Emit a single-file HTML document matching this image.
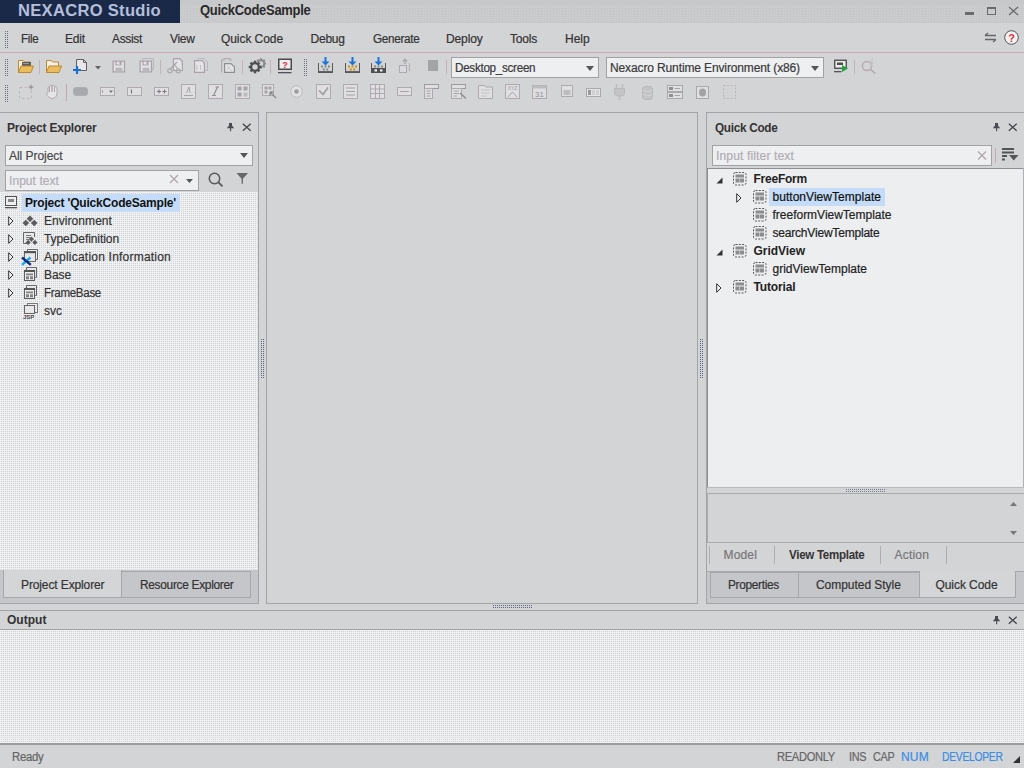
<!DOCTYPE html>
<html><head><meta charset="utf-8"><title>Nexacro Studio</title>
<style>
html,body{margin:0;padding:0;}
body{width:1024px;height:768px;overflow:hidden;position:relative;background:#d3d4d6;font-family:"Liberation Sans", sans-serif;}
.a{position:absolute;}
.t{position:absolute;white-space:nowrap;font-family:"Liberation Sans", sans-serif;-webkit-text-stroke:0.2px currentColor;}
</style></head><body>
<div class="a" style="left:0px;top:0px;width:1024px;height:23px;background:#c7c8ca;"></div>
<svg class="a" style="left:180px;top:5px" width="844" height="18"><defs><pattern id="tdots" width="3" height="4" patternUnits="userSpaceOnUse"><rect x="2" y="0" width="1" height="1" fill="#d3d4d6"/><rect x="0" y="2" width="1" height="1" fill="#d3d4d6"/></pattern></defs><rect width="844" height="18" fill="url(#tdots)"/></svg>
<div class="a" style="left:0px;top:0px;width:180px;height:23px;background:#1a2948;"></div>
<div class="a" style="left:965px;top:12px;width:9px;height:3px;background:#6a6a6a;"></div>
<div class="a" style="left:987px;top:7px;width:9px;height:8px;border:2px solid #6a6a6a;box-sizing:border-box;border-width:2px 1px 1px 1px;"></div>
<svg class="a" style="left:1008px;top:6px;" width="11" height="10" viewBox="0 0 11 10"><path d="M1 1 L10 9 M10 1 L1 9" stroke="#6a6a6a" stroke-width="1.3"/></svg>
<svg class="a" style="left:5px;top:31px;" width="4" height="18" viewBox="0 0 4 18"><g fill="#6b6f80"><rect x="0" y="0" width="1" height="1"/><rect x="2" y="0" width="1" height="1"/><rect x="0" y="2" width="1" height="1"/><rect x="2" y="2" width="1" height="1"/><rect x="0" y="4" width="1" height="1"/><rect x="2" y="4" width="1" height="1"/><rect x="0" y="6" width="1" height="1"/><rect x="2" y="6" width="1" height="1"/><rect x="0" y="8" width="1" height="1"/><rect x="2" y="8" width="1" height="1"/><rect x="0" y="10" width="1" height="1"/><rect x="2" y="10" width="1" height="1"/><rect x="0" y="12" width="1" height="1"/><rect x="2" y="12" width="1" height="1"/><rect x="0" y="14" width="1" height="1"/><rect x="2" y="14" width="1" height="1"/><rect x="0" y="16" width="1" height="1"/><rect x="2" y="16" width="1" height="1"/></g></svg>
<svg class="a" style="left:984px;top:32px;" width="13" height="11" viewBox="0 0 13 11"><path d="M1 3.5 H12 M1 3.5 L4 1 M12 7.5 H1 M12 7.5 L9 10" stroke="#666" stroke-width="1.4" fill="none"/></svg>
<svg class="a" style="left:1004px;top:30px;" width="15" height="15" viewBox="0 0 15 15"><circle cx="7.5" cy="7.5" r="6.8" fill="#f2f2f2" stroke="#555" stroke-width="1"/><text x="7.5" y="11.6" font-family="Liberation Sans" font-weight="bold" font-size="11" fill="#e0303a" text-anchor="middle">?</text></svg>
<div class="a" style="left:0px;top:52px;width:1024px;height:1px;background:#c8aab3;"></div>
<svg class="a" style="left:5px;top:59px;" width="4" height="18" viewBox="0 0 4 18"><g fill="#6b6f80"><rect x="0" y="0" width="1" height="1"/><rect x="2" y="0" width="1" height="1"/><rect x="0" y="2" width="1" height="1"/><rect x="2" y="2" width="1" height="1"/><rect x="0" y="4" width="1" height="1"/><rect x="2" y="4" width="1" height="1"/><rect x="0" y="6" width="1" height="1"/><rect x="2" y="6" width="1" height="1"/><rect x="0" y="8" width="1" height="1"/><rect x="2" y="8" width="1" height="1"/><rect x="0" y="10" width="1" height="1"/><rect x="2" y="10" width="1" height="1"/><rect x="0" y="12" width="1" height="1"/><rect x="2" y="12" width="1" height="1"/><rect x="0" y="14" width="1" height="1"/><rect x="2" y="14" width="1" height="1"/><rect x="0" y="16" width="1" height="1"/><rect x="2" y="16" width="1" height="1"/></g></svg>
<svg class="a" style="left:18px;top:60px;" width="16" height="13" viewBox="0 0 16 13"><path d="M0.5 12 V0.5 H5.5 L6.5 2 H12.5 V6" fill="#f3eee8" stroke="#bf8a2c"/><rect x="4" y="2" width="9" height="4" fill="#5d5d5f"/><rect x="5" y="3" width="6" height="1" fill="#9a9a9c"/><path d="M0.5 12.5 L3 6 H15.5 L13 12.5 Z" fill="#ebbc5e" stroke="#bf8a2c"/></svg>
<div class="a" style="left:39px;top:60px;width:1px;height:14px;background:#c4b2ba;"></div>
<svg class="a" style="left:46px;top:60px;" width="16" height="13" viewBox="0 0 16 13"><path d="M0.5 12 V0.5 H5.5 L6.5 2 H12.5 V6" fill="#f3eee8" stroke="#bf8a2c"/><path d="M0.5 12.5 L3 6 H15.5 L13 12.5 Z" fill="#ebbc5e" stroke="#bf8a2c"/></svg>
<svg class="a" style="left:72px;top:58px;" width="16" height="17" viewBox="0 0 16 17"><path d="M4.5 1.5 H11.5 L14.5 4.5 V12.5 H4.5 Z" fill="#e9e7e9" stroke="#606060" stroke-width="1"/><path d="M11.5 1.5 V4.5 H14.5" fill="none" stroke="#606060"/><path d="M5 8 V16 M1 12 H9" stroke="#1a6fd6" stroke-width="2.2"/></svg>
<svg class="a" style="left:95px;top:66px;" width="6" height="4" viewBox="0 0 6 4"><path d="M0 0 H6 L3 3.5 Z" fill="#666"/></svg>
<svg class="a" style="left:112px;top:60px;" width="14" height="13" viewBox="0 0 14 13"><g transform="translate(0.5,0.5)"><path d="M0.6 0.6 H12 V11.4 H0.6 Z" fill="#e4e4e6" stroke="#aba1aa" stroke-width="1.3"/><path d="M3.5 0.6 V4.5 H8.5 V0.6" fill="none" stroke="#aba1aa" stroke-width="1.2"/><rect x="7" y="1" width="1.5" height="2.5" fill="#aba1aa"/><rect x="3" y="7.2" width="6.8" height="4" fill="#b9b9bc"/></g></svg>
<svg class="a" style="left:139px;top:58px;" width="16" height="15" viewBox="0 0 16 15"><path d="M3.5 2.5 V0.5 H14.5 V11.5 H13" fill="none" stroke="#b8b8bc"/><g transform="translate(0.5,2.5)"><path d="M0.6 0.6 H12 V11.4 H0.6 Z" fill="#e4e4e6" stroke="#aba1aa" stroke-width="1.3"/><path d="M3.5 0.6 V4.5 H8.5 V0.6" fill="none" stroke="#aba1aa" stroke-width="1.2"/><rect x="7" y="1" width="1.5" height="2.5" fill="#aba1aa"/><rect x="3" y="7.2" width="6.8" height="4" fill="#b9b9bc"/></g></svg>
<div class="a" style="left:160px;top:60px;width:1px;height:14px;background:#c4b2ba;"></div>
<svg class="a" style="left:167px;top:58px;" width="16" height="16" viewBox="0 0 16 16"><path d="M6.5 0.6 H12.5 L15.4 3.5 V12.5 H6.5 Z" fill="#e4e4e6" stroke="#aba1aa" stroke-width="1.2"/><path d="M10 4 L3 11.5 M7 6 L11 11" stroke="#a8a8ac" stroke-width="1.2"/><circle cx="2.8" cy="12.8" r="2.1" fill="none" stroke="#a8a8ac" stroke-width="1.1"/><circle cx="11.2" cy="12.8" r="2.1" fill="none" stroke="#a8a8ac" stroke-width="1.1"/></svg>
<svg class="a" style="left:194px;top:58px;" width="15" height="16" viewBox="0 0 15 16"><path d="M3.5 0.5 H10 L13.5 4 V12.5 H11" fill="none" stroke="#b8b8bc"/><path d="M0.6 2.6 H8 L10.4 5 V14.4 H0.6 Z" fill="#e4e4e6" stroke="#aba1aa" stroke-width="1.2"/><path d="M3 7 V12 M6.5 7 V12" stroke="#c0c0c3"/></svg>
<svg class="a" style="left:221px;top:58px;" width="14" height="16" viewBox="0 0 14 16"><path d="M0.6 14.4 V2 H3 V0.6 H9 V2 H11" fill="none" stroke="#b4acb2" stroke-width="1.2"/><path d="M3.6 5.6 H10 L13.4 9 V14.4 H3.6 Z" fill="#e6e6e8" stroke="#8f8f92" stroke-width="1.2"/><path d="M6 8 L11 13 M9 8 L6 12" stroke="#c4c4c7"/></svg>
<div class="a" style="left:242px;top:60px;width:1px;height:14px;background:#c4b2ba;"></div>
<svg class="a" style="left:248px;top:57px;" width="18" height="17" viewBox="0 0 18 17"><circle cx="13" cy="6.5" r="3.3" fill="none" stroke="#8c8c8e" stroke-width="2.0"/><rect x="12.0" y="1.2999999999999998" width="2" height="2" fill="#8c8c8e" transform="rotate(0 13 6.5)"/><rect x="12.0" y="1.2999999999999998" width="2" height="2" fill="#8c8c8e" transform="rotate(45 13 6.5)"/><rect x="12.0" y="1.2999999999999998" width="2" height="2" fill="#8c8c8e" transform="rotate(90 13 6.5)"/><rect x="12.0" y="1.2999999999999998" width="2" height="2" fill="#8c8c8e" transform="rotate(135 13 6.5)"/><rect x="12.0" y="1.2999999999999998" width="2" height="2" fill="#8c8c8e" transform="rotate(180 13 6.5)"/><rect x="12.0" y="1.2999999999999998" width="2" height="2" fill="#8c8c8e" transform="rotate(225 13 6.5)"/><rect x="12.0" y="1.2999999999999998" width="2" height="2" fill="#8c8c8e" transform="rotate(270 13 6.5)"/><rect x="12.0" y="1.2999999999999998" width="2" height="2" fill="#8c8c8e" transform="rotate(315 13 6.5)"/><circle cx="7" cy="10" r="5.6" fill="#d3d4d6"/><circle cx="7" cy="10" r="3.9" fill="none" stroke="#505052" stroke-width="2.4"/><rect x="5.8" y="3.7" width="2.4" height="2.4" fill="#505052" transform="rotate(0 7 10)"/><rect x="5.8" y="3.7" width="2.4" height="2.4" fill="#505052" transform="rotate(45 7 10)"/><rect x="5.8" y="3.7" width="2.4" height="2.4" fill="#505052" transform="rotate(90 7 10)"/><rect x="5.8" y="3.7" width="2.4" height="2.4" fill="#505052" transform="rotate(135 7 10)"/><rect x="5.8" y="3.7" width="2.4" height="2.4" fill="#505052" transform="rotate(180 7 10)"/><rect x="5.8" y="3.7" width="2.4" height="2.4" fill="#505052" transform="rotate(225 7 10)"/><rect x="5.8" y="3.7" width="2.4" height="2.4" fill="#505052" transform="rotate(270 7 10)"/><rect x="5.8" y="3.7" width="2.4" height="2.4" fill="#505052" transform="rotate(315 7 10)"/></svg>
<div class="a" style="left:270px;top:60px;width:1px;height:14px;background:#c4b2ba;"></div>
<svg class="a" style="left:278px;top:58px;" width="14" height="16" viewBox="0 0 14 16"><rect x="0.75" y="1.25" width="12.5" height="10" fill="#ededee" stroke="#4a4a4a" stroke-width="1.5"/><text x="7" y="10" font-family="Liberation Sans" font-weight="bold" font-size="9" fill="#e0283a" text-anchor="middle">?</text><rect x="0" y="14" width="13.5" height="1.3" fill="#505058"/></svg>
<svg class="a" style="left:304px;top:59px;" width="4" height="18" viewBox="0 0 4 18"><g fill="#6b6f80"><rect x="0" y="0" width="1" height="1"/><rect x="2" y="0" width="1" height="1"/><rect x="0" y="2" width="1" height="1"/><rect x="2" y="2" width="1" height="1"/><rect x="0" y="4" width="1" height="1"/><rect x="2" y="4" width="1" height="1"/><rect x="0" y="6" width="1" height="1"/><rect x="2" y="6" width="1" height="1"/><rect x="0" y="8" width="1" height="1"/><rect x="2" y="8" width="1" height="1"/><rect x="0" y="10" width="1" height="1"/><rect x="2" y="10" width="1" height="1"/><rect x="0" y="12" width="1" height="1"/><rect x="2" y="12" width="1" height="1"/><rect x="0" y="14" width="1" height="1"/><rect x="2" y="14" width="1" height="1"/><rect x="0" y="16" width="1" height="1"/><rect x="2" y="16" width="1" height="1"/></g></svg>
<svg class="a" style="left:318px;top:57px;" width="15" height="16" viewBox="0 0 15 16"><rect x="6.5" y="0" width="2" height="5" fill="#1a73d9"/><path d="M3.5 4.5 H11.5 L7.5 8.5 Z" fill="#1a73d9"/><path d="M0.5 6 V15 H14.5 V6" fill="none" stroke="#58585a"/><rect x="0" y="14.2" width="15" height="1.8" fill="#58585a"/><g fill="#88888a"><rect x="3" y="8.5" width="2" height="2"/><rect x="6.5" y="8.5" width="2" height="2"/><rect x="10" y="8.5" width="2" height="2"/><rect x="4.8" y="11.5" width="2" height="2"/><rect x="8.2" y="11.5" width="2" height="2"/></g></svg>
<svg class="a" style="left:345px;top:57px;" width="15" height="16" viewBox="0 0 15 16"><rect x="6.5" y="0" width="2" height="5" fill="#1a73d9"/><path d="M3.5 4.5 H11.5 L7.5 8.5 Z" fill="#1a73d9"/><path d="M0.5 6 V15 H14.5 V6" fill="none" stroke="#58585a"/><rect x="0" y="14.2" width="15" height="1.8" fill="#58585a"/><g fill="#d28f10"><rect x="3" y="8.5" width="2" height="2"/><rect x="6.5" y="8.5" width="2" height="2"/><rect x="10" y="8.5" width="2" height="2"/><rect x="4.8" y="11.5" width="2" height="2"/><rect x="8.2" y="11.5" width="2" height="2"/></g></svg>
<svg class="a" style="left:371px;top:57px;" width="15" height="16" viewBox="0 0 15 16"><rect x="6.5" y="0" width="2" height="5" fill="#1a73d9"/><path d="M3.5 4.5 H11.5 L7.5 8.5 Z" fill="#1a73d9"/><path d="M0.5 6 V15 H14.5 V6" fill="none" stroke="#58585a"/><rect x="0" y="14.2" width="15" height="1.8" fill="#58585a"/><g fill="#8a8a8c"><rect x="3" y="8.5" width="2" height="2"/><rect x="6.5" y="8.5" width="2" height="2"/><rect x="10" y="8.5" width="2" height="2"/></g><rect x="0" y="11" width="15" height="5" fill="#505052"/><rect x="3.5" y="12.3" width="2.5" height="2.2" fill="#f0f0f0"/><rect x="9" y="12.3" width="2.5" height="2.2" fill="#f0f0f0"/></svg>
<svg class="a" style="left:399px;top:58px;" width="13" height="15" viewBox="0 0 13 15"><rect x="0.5" y="7.5" width="7" height="7" fill="#dadadc" stroke="#b0a8b0" /><path d="M6 6 V1.5 M3.8 3.5 L6 1.2 L8.2 3.5" stroke="#a9a9ad" stroke-width="1.3" fill="none"/><path d="M10.5 13 V5" stroke="#b9b0b8" stroke-width="1.3"/></svg>
<div class="a" style="left:428px;top:60px;width:10px;height:11px;background:#a3a4a6;"></div>
<div class="a" style="left:446px;top:60px;width:1px;height:14px;background:#c4b2ba;"></div>
<div class="a" style="left:451px;top:57px;width:148px;height:21px;background:#eeeff1;border:1px solid #a2a2a4;box-sizing:border-box;"></div>
<svg class="a" style="left:586px;top:66px;" width="8" height="5" viewBox="0 0 8 5"><path d="M0 0 H8 L4 5 Z" fill="#555"/></svg>
<div class="a" style="left:606px;top:57px;width:218px;height:21px;background:#eeeff1;border:1px solid #a2a2a4;box-sizing:border-box;"></div>
<svg class="a" style="left:811px;top:66px;" width="8" height="5" viewBox="0 0 8 5"><path d="M0 0 H8 L4 5 Z" fill="#555"/></svg>
<svg class="a" style="left:834px;top:59px;" width="15" height="15" viewBox="0 0 15 15"><rect x="0.75" y="1.25" width="11.5" height="8" fill="#ececee" stroke="#48484a" stroke-width="1.3"/><rect x="3" y="3.5" width="6" height="2.5" fill="#4e4e40"/><rect x="0" y="12" width="7.5" height="1.3" fill="#555"/><path d="M8 6 L14 9.5 L8 13 Z" fill="#22a33a"/></svg>
<div class="a" style="left:854px;top:60px;width:1px;height:14px;background:#c4b2ba;"></div>
<svg class="a" style="left:861px;top:58px;" width="16" height="16" viewBox="0 0 16 16"><circle cx="6" cy="8" r="4.6" fill="none" stroke="#b8acb4" stroke-width="1.5"/><path d="M9.3 11.3 L14.5 15.5" stroke="#b4acb2" stroke-width="1.6"/><path d="M12 0.5 L9.5 4.5 H12 L10 8" stroke="#c4c4c8" stroke-width="1.2" fill="none"/></svg>
<svg class="a" style="left:5px;top:85px;" width="4" height="18" viewBox="0 0 4 18"><g fill="#6b6f80"><rect x="0" y="0" width="1" height="1"/><rect x="2" y="0" width="1" height="1"/><rect x="0" y="2" width="1" height="1"/><rect x="2" y="2" width="1" height="1"/><rect x="0" y="4" width="1" height="1"/><rect x="2" y="4" width="1" height="1"/><rect x="0" y="6" width="1" height="1"/><rect x="2" y="6" width="1" height="1"/><rect x="0" y="8" width="1" height="1"/><rect x="2" y="8" width="1" height="1"/><rect x="0" y="10" width="1" height="1"/><rect x="2" y="10" width="1" height="1"/><rect x="0" y="12" width="1" height="1"/><rect x="2" y="12" width="1" height="1"/><rect x="0" y="14" width="1" height="1"/><rect x="2" y="14" width="1" height="1"/><rect x="0" y="16" width="1" height="1"/><rect x="2" y="16" width="1" height="1"/></g></svg>
<svg class="a" style="left:18px;top:84px;" width="16" height="16" viewBox="0 0 16 16"><rect x="1.5" y="3.5" width="12" height="11" fill="none" stroke="#c0b0b8" stroke-dasharray="2.5 2.5"/><path d="M13 0.5 V5.5 M10.5 3 H15.5" stroke="#8a8a8a"/></svg>
<svg class="a" style="left:45px;top:84px;" width="15" height="15" viewBox="0 0 15 15"><path d="M3 9 V4 Q3 2.5 4.5 3 V8 V2 Q6 0.5 7 2 V8 V1.5 Q8.5 0.5 9.5 2 V8 V3 Q11 2 12 3.5 V10 Q11 14.5 7 14.5 Q4 14.5 1 10 Z" fill="#e4e4e6" stroke="#b0aab0"/></svg>
<div class="a" style="left:66px;top:84px;width:1px;height:17px;background:#c0a8b0;"></div>
<svg class="a" style="left:73px;top:87px;" width="15" height="9" viewBox="0 0 15 9"><rect x="0.5" y="0.5" width="14" height="8" rx="2.5" fill="#a8a9ad" stroke="#b0b0b4"/></svg>
<svg class="a" style="left:100px;top:87px;" width="15" height="10" viewBox="0 0 15 10"><rect x="0.5" y="0.5" width="14" height="8" fill="#dfdfe1" stroke="#b0a9b1"/><path d="M9 3.5 H13 L11 6 Z" fill="#777"/><path d="M2.5 3 V6" stroke="#a4a4a8"/></svg>
<svg class="a" style="left:127px;top:87px;" width="15" height="10" viewBox="0 0 15 10"><rect x="0.5" y="0.5" width="14" height="8" fill="#dfdfe1" stroke="#b0a9b1"/><path d="M4.5 2.5 V6.5" stroke="#777" stroke-width="1.2"/></svg>
<svg class="a" style="left:154px;top:87px;" width="15" height="10" viewBox="0 0 15 10"><rect x="0.5" y="0.5" width="14" height="8" fill="#dfdfe1" stroke="#b0a9b1"/><path d="M3 4.5 H7 M5 2.5 V6.5 M8.5 4.5 H12.5 M10.5 2.5 V6.5" stroke="#777"/></svg>
<svg class="a" style="left:181px;top:84px;" width="15" height="15" viewBox="0 0 15 15"><rect x="0.5" y="0.5" width="14" height="14" fill="#dfdfe1" stroke="#b0a9b1"/><path d="M8 3 L5.5 9 M8 3 L9 9 M3 11.5 H12" stroke="#a4a4a8"/></svg>
<svg class="a" style="left:208px;top:84px;" width="15" height="15" viewBox="0 0 15 15"><rect x="0.5" y="0.5" width="14" height="14" fill="#dfdfe1" stroke="#b0a9b1"/><path d="M9.5 3 L5.5 11.5 M7.5 3 H11 M4 11.5 H8" stroke="#8f8f92" stroke-width="1.2"/></svg>
<svg class="a" style="left:235px;top:84px;" width="15" height="15" viewBox="0 0 15 15"><rect x="0.5" y="0.5" width="14" height="14" fill="#dfdfe1" stroke="#b0a9b1"/><rect x="2.5" y="2.5" width="4" height="4" fill="#a4a4a8"/><rect x="8.5" y="2.5" width="4" height="4" fill="#a4a4a8"/><rect x="2.5" y="8.5" width="4" height="4" fill="#a4a4a8"/><rect x="8.5" y="8.5" width="4" height="4" fill="#bcbcbf"/></svg>
<svg class="a" style="left:262px;top:84px;" width="15" height="15" viewBox="0 0 15 15"><rect x="0.5" y="0.5" width="11" height="11" fill="#dfdfe1" stroke="#b0a9b1"/><rect x="2.5" y="2.5" width="3" height="3" fill="#a4a4a8"/><rect x="6.5" y="2.5" width="3" height="3" fill="#a4a4a8"/><rect x="2.5" y="6.5" width="3" height="3" fill="#a4a4a8"/><path d="M8 8 L14 14 M8 8 H11.5 M8 8 V11.5" stroke="#8a8a8d" stroke-width="1.4"/></svg>
<svg class="a" style="left:290px;top:85px;" width="13" height="13" viewBox="0 0 13 13"><circle cx="6.5" cy="6.5" r="5.8" fill="#e2e2e4" stroke="#b8b8bc"/><circle cx="6.5" cy="6.5" r="2.3" fill="#9d9da0"/></svg>
<svg class="a" style="left:316px;top:84px;" width="15" height="15" viewBox="0 0 15 15"><rect x="0.5" y="0.5" width="14" height="14" fill="#dfdfe1" stroke="#b0a9b1"/><path d="M3 6.5 L7 10.5 L12 3.5" stroke="#9c9ca0" stroke-width="1.6" fill="none"/></svg>
<svg class="a" style="left:343px;top:84px;" width="15" height="15" viewBox="0 0 15 15"><rect x="0.5" y="0.5" width="14" height="14" fill="#dfdfe1" stroke="#b0a9b1"/><path d="M3 4 H12 M3 7.5 H12 M3 11 H12" stroke="#a4a4a8" stroke-width="1.2"/></svg>
<svg class="a" style="left:370px;top:84px;" width="15" height="15" viewBox="0 0 15 15"><rect x="0.5" y="0.5" width="14" height="14" fill="#dfdfe1" stroke="#b0a9b1"/><path d="M5.5 1 V14 M9.5 1 V14 M1 5 H14 M1 9.5 H14" stroke="#b0a9b1"/></svg>
<svg class="a" style="left:397px;top:87px;" width="15" height="10" viewBox="0 0 15 10"><rect x="0.5" y="0.5" width="14" height="8" fill="#dfdfe1" stroke="#b0a9b1"/><path d="M3 4.5 H12" stroke="#a4a4a8"/></svg>
<svg class="a" style="left:424px;top:84px;" width="15" height="15" viewBox="0 0 15 15"><rect x="0.5" y="0.5" width="14" height="4" fill="#dfdfe1" stroke="#9c9ca0"/><rect x="0.5" y="4.5" width="8" height="10" fill="#dfdfe1" stroke="#b0a9b1"/><path d="M2.5 7 H6.5 M2.5 9.5 H6.5 M2.5 12 H6.5" stroke="#a4a4a8"/></svg>
<svg class="a" style="left:451px;top:84px;" width="16" height="15" viewBox="0 0 16 15"><rect x="0.5" y="0.5" width="14" height="4" fill="#dfdfe1" stroke="#9c9ca0"/><rect x="0.5" y="4.5" width="10" height="10" fill="#dfdfe1" stroke="#b0a9b1"/><path d="M2.5 7 H8 M2.5 9.5 H8 M2.5 12 H6" stroke="#a4a4a8"/><path d="M9 9 L15 14.5" stroke="#8a8a8d" stroke-width="1.4"/></svg>
<svg class="a" style="left:478px;top:84px;" width="15" height="15" viewBox="0 0 15 15"><path d="M0.5 1.5 H7 L8 3 H14.5 V14.5 H0.5 Z" fill="#dfdfe1" stroke="#b0a9b1"/><path d="M3 6 H12 M3 9 H12 M3 12 H9" stroke="#c4c4c7"/></svg>
<svg class="a" style="left:505px;top:84px;" width="15" height="15" viewBox="0 0 15 15"><rect x="0.5" y="0.5" width="14" height="14" fill="#dfdfe1" stroke="#b0a9b1"/><text x="7.5" y="6" font-family="Liberation Sans" font-size="5" fill="#999" text-anchor="middle">XYZ</text><path d="M3 13 L7.5 8 L12 13" stroke="#a4a4a8" fill="none"/></svg>
<svg class="a" style="left:532px;top:84px;" width="15" height="15" viewBox="0 0 15 15"><rect x="0.5" y="1.5" width="14" height="13" fill="#dfdfe1" stroke="#b0a9b1"/><rect x="0.5" y="1.5" width="14" height="3" fill="#bdbdc0"/><text x="7.5" y="13" font-family="Liberation Sans" font-size="8" fill="#8f8f92" text-anchor="middle">31</text></svg>
<svg class="a" style="left:561px;top:85px;" width="12" height="12" viewBox="0 0 12 12"><rect x="0.5" y="0.5" width="11" height="11" fill="#dfdfe1" stroke="#b0a9b1"/><rect x="2.5" y="5" width="7" height="5" fill="#bdbdc0"/></svg>
<svg class="a" style="left:586px;top:88px;" width="15" height="9" viewBox="0 0 15 9"><rect x="0.5" y="0.5" width="14" height="8" fill="#e4e4e6" stroke="#a9a9ad"/><rect x="2" y="2" width="3" height="5" fill="#9a9a9d"/><rect x="6" y="2" width="3" height="5" fill="#cfcfd2"/><rect x="10" y="2" width="3" height="5" fill="#cfcfd2"/></svg>
<svg class="a" style="left:614px;top:84px;" width="11" height="16" viewBox="0 0 11 16"><path d="M2.5 0 V4 M8.5 0 V4" stroke="#bcbcc0" stroke-width="1.5"/><path d="M0.5 4.5 H10.5 V9 Q10.5 12 5.5 12 Q0.5 12 0.5 9 Z" fill="#c4c4c7" stroke="#b8b8bc"/><path d="M5.5 12 V16" stroke="#bcbcc0" stroke-width="1.5"/></svg>
<svg class="a" style="left:642px;top:86px;" width="11" height="14" viewBox="0 0 11 14"><rect x="0.5" y="0.5" width="10" height="13" rx="3" fill="#c4c4c7" stroke="#b8b8bc"/><path d="M1 4.5 Q5.5 7 10 4.5 M1 8.5 Q5.5 11 10 8.5" stroke="#d4d4d6" fill="none"/></svg>
<svg class="a" style="left:667px;top:85px;" width="16" height="14" viewBox="0 0 16 14"><rect x="0.5" y="0.5" width="15" height="6" fill="#e0e0e2" stroke="#a9a9ad"/><rect x="0.5" y="7.5" width="15" height="6" fill="#e0e0e2" stroke="#a9a9ad"/><rect x="2" y="2" width="4" height="3" fill="#8f8f92"/><rect x="2" y="9" width="4" height="3" fill="#8f8f92"/><path d="M7.5 3.5 H13 M7.5 10.5 H13" stroke="#a4a4a8"/></svg>
<svg class="a" style="left:696px;top:86px;" width="13" height="13" viewBox="0 0 13 13"><rect x="0.5" y="0.5" width="12" height="12" fill="#dfdfe1" stroke="#a9a9ad"/><ellipse cx="6.5" cy="6.5" rx="3.5" ry="4" fill="#a2a2a5"/></svg>
<svg class="a" style="left:723px;top:85px;" width="13" height="14" viewBox="0 0 13 14"><rect x="0.5" y="0.5" width="12" height="13" fill="none" stroke="#bcb4ba" stroke-dasharray="2 1.5"/><path d="M4 4 H9 M4 7 H9 M4 10 H9" stroke="#c8c8cb" stroke-dasharray="1 1"/></svg>
<div class="a" style="left:0px;top:112px;width:259px;height:1px;background:#a3a4a7;"></div>
<div class="a" style="left:258px;top:112px;width:1px;height:492px;background:#a3a4a7;"></div>
<div class="a" style="left:0px;top:603px;width:259px;height:1px;background:#a3a4a7;"></div>
<svg class="a" style="left:227px;top:122px;" width="8" height="10" viewBox="0 0 8 10"><rect x="2" y="1" width="3" height="3" fill="#4a4a52"/><path d="M2 3.6 H5 L7.2 6.2 H-0.2 Z" fill="#4a4a52"/><rect x="3" y="6" width="1.2" height="3.2" fill="#55555a"/></svg>
<svg class="a" style="left:242px;top:123px;" width="10" height="9" viewBox="0 0 10 9"><path d="M0.8 0.8 L8.7 7.7 M8.7 0.8 L0.8 7.7" stroke="#45454c" stroke-width="1.3"/></svg>
<div class="a" style="left:5px;top:145px;width:248px;height:21px;background:#eeeff1;border:1px solid #a2a2a4;box-sizing:border-box;"></div>
<svg class="a" style="left:240px;top:153px;" width="8" height="5" viewBox="0 0 8 5"><path d="M0 0 H8 L4 5 Z" fill="#555"/></svg>
<div class="a" style="left:5px;top:170px;width:194px;height:21px;background:#eeeff1;border:1px solid #a2a2a4;box-sizing:border-box;"></div>
<svg class="a" style="left:169px;top:174px;" width="10" height="10" viewBox="0 0 10 10"><path d="M1 1 L9 9 M9 1 L1 9" stroke="#b0a4aa" stroke-width="1.2"/></svg>
<svg class="a" style="left:186px;top:179px;" width="7" height="5" viewBox="0 0 7 5"><path d="M0 0 H7 L3.5 4 Z" fill="#555"/></svg>
<svg class="a" style="left:208px;top:172px;" width="16" height="15" viewBox="0 0 16 15"><circle cx="6.5" cy="6.5" r="5.2" fill="none" stroke="#5a5a5c" stroke-width="1.5"/><path d="M10.2 10.2 L14.5 14.3" stroke="#5a5a5c" stroke-width="1.8"/></svg>
<svg class="a" style="left:236px;top:172px;" width="13" height="12" viewBox="0 0 13 12"><path d="M0.5 1 H12 L6.25 7.5 Z" fill="#68686a"/><rect x="5.6" y="6" width="1.3" height="5.8" fill="#68686a"/></svg>
<div class="a" style="left:0px;top:192px;width:258px;height:378px;background:#e7e8eb;"></div>
<svg class="a" style="left:0;top:192px" width="258" height="378"><defs><pattern id="dith" width="2" height="2" patternUnits="userSpaceOnUse"><rect width="2" height="2" fill="#eff0f2"/><rect x="1" y="1" width="1" height="1" fill="#d0d1d4"/></pattern></defs><rect width="258" height="378" fill="url(#dith)"/></svg>
<div class="a" style="left:22px;top:194px;width:158px;height:18px;background:#c4dcf7;"></div>
<svg class="a" style="left:5px;top:196px;" width="12" height="13" viewBox="0 0 12 13"><rect x="0.5" y="0.5" width="11" height="9" fill="#eee" stroke="#555"/><rect x="3" y="3" width="6" height="3" fill="#888"/><rect x="0" y="11" width="12" height="1.3" fill="#555"/></svg>
<svg class="a" style="left:8px;top:216px;" width="6" height="10" viewBox="0 0 6 10"><path d="M0.7 0.7 L5 5 L0.7 9.3 Z" fill="#f2f2f2" stroke="#333" stroke-width="1"/></svg>
<svg class="a" style="left:8px;top:234px;" width="6" height="10" viewBox="0 0 6 10"><path d="M0.7 0.7 L5 5 L0.7 9.3 Z" fill="#f2f2f2" stroke="#333" stroke-width="1"/></svg>
<svg class="a" style="left:8px;top:252px;" width="6" height="10" viewBox="0 0 6 10"><path d="M0.7 0.7 L5 5 L0.7 9.3 Z" fill="#f2f2f2" stroke="#333" stroke-width="1"/></svg>
<svg class="a" style="left:8px;top:270px;" width="6" height="10" viewBox="0 0 6 10"><path d="M0.7 0.7 L5 5 L0.7 9.3 Z" fill="#f2f2f2" stroke="#333" stroke-width="1"/></svg>
<svg class="a" style="left:8px;top:288px;" width="6" height="10" viewBox="0 0 6 10"><path d="M0.7 0.7 L5 5 L0.7 9.3 Z" fill="#f2f2f2" stroke="#333" stroke-width="1"/></svg>
<svg class="a" style="left:22px;top:214px;" width="16" height="14" viewBox="0 0 16 14"><path d="M8 1.5 L11.3 4.8 L8 8.1 L4.7 4.8 Z M3.8 5.7 L7.1 9 L3.8 12.3 L0.5 9 Z M12.2 5.7 L15.5 9 L12.2 12.3 L8.899999999999999 9 Z" fill="#5c5c5e"/></svg>
<svg class="a" style="left:23px;top:232px;" width="15" height="15" viewBox="0 0 15 15"><path d="M11.5 5 V0.5 H0.5 V11.5 H4" fill="#e9e9eb" stroke="#666"/><path d="M3 3.5 H8 M3 5.5 H7 M3 7.5 H6" stroke="#777"/><path d="M8.4 4.5 L11 7.1 L8.4 9.7 L5.8 7.1 Z M5.2 7.8 L7.8 10.4 L5.2 13 L2.6 10.4 Z M11.9 7.8 L14.5 10.4 L11.9 13 L9.3 10.4 Z" fill="#5a5a5c"/></svg>
<svg class="a" style="left:21px;top:249px;" width="18" height="17" viewBox="0 0 18 17"><path d="M6.5 2.5 V0.5 H16.5 V10.5 H14.5" fill="none" stroke="#666"/><rect x="3.5" y="2.5" width="11" height="10" fill="#e8e8ea" stroke="#666"/><rect x="3" y="2" width="12" height="2.2" fill="#555"/><path d="M9.5 8.5 L1 15.8" stroke="#19a8f0" stroke-width="2.4"/><path d="M1 8.5 L9.8 15.8" stroke="#0d2a78" stroke-width="2.4"/></svg>
<svg class="a" style="left:23px;top:267px;" width="15" height="15" viewBox="0 0 15 15"><path d="M3.5 3 V0.5 H13.5 V10.5 H12" fill="none" stroke="#666"/><rect x="1.5" y="3.5" width="10" height="10" fill="#eeeeef" stroke="#5e5e60"/><rect x="1" y="3" width="11" height="2" fill="#555"/><rect x="3" y="6.5" width="7" height="1.8" fill="#828284"/><rect x="3" y="9.3" width="3" height="3" fill="#828284"/><rect x="7" y="9.3" width="3" height="3" fill="#828284"/></svg>
<svg class="a" style="left:23px;top:285px;" width="15" height="15" viewBox="0 0 15 15"><path d="M3.5 3 V0.5 H13.5 V10.5 H12" fill="none" stroke="#666"/><rect x="1.5" y="3.5" width="10" height="10" fill="#eeeeef" stroke="#5e5e60"/><rect x="1" y="3" width="11" height="2" fill="#555"/><rect x="3" y="6.5" width="7" height="1.8" fill="#828284"/><rect x="3" y="9.3" width="3" height="3" fill="#828284"/><rect x="7" y="9.3" width="3" height="3" fill="#828284"/></svg>
<svg class="a" style="left:22px;top:303px;" width="16" height="16" viewBox="0 0 16 16"><rect x="5.5" y="0.5" width="10" height="9" fill="none" stroke="#777"/><rect x="2.5" y="2.5" width="10" height="8" fill="#e8e8ea" stroke="#666"/><text x="1" y="15.5" font-family="Liberation Sans" font-weight="bold" font-size="6" fill="#444">JSP</text></svg>
<div class="a" style="left:0px;top:570px;width:258px;height:33px;background:#c5c6c9;"></div>
<div class="a" style="left:3px;top:570px;width:119px;height:28px;background:#d4d5d7;border:1px solid #a6a7aa;box-sizing:border-box;border-top:none;"></div>
<div class="a" style="left:121px;top:571px;width:130px;height:27px;background:#c5c6c9;border:1px solid #a6a7aa;box-sizing:border-box;"></div>
<div class="a" style="left:266px;top:112px;width:432px;height:492px;background:#d3d4d6;border:1px solid #a3a4a7;box-sizing:border-box;"></div>
<svg class="a" style="left:261px;top:339px;" width="4" height="40" viewBox="0 0 4 40"><g fill="#5f6480"><rect x="0" y="0" width="1" height="1"/><rect x="2" y="0" width="1" height="1"/><rect x="0" y="2" width="1" height="1"/><rect x="2" y="2" width="1" height="1"/><rect x="0" y="4" width="1" height="1"/><rect x="2" y="4" width="1" height="1"/><rect x="0" y="6" width="1" height="1"/><rect x="2" y="6" width="1" height="1"/><rect x="0" y="8" width="1" height="1"/><rect x="2" y="8" width="1" height="1"/><rect x="0" y="10" width="1" height="1"/><rect x="2" y="10" width="1" height="1"/><rect x="0" y="12" width="1" height="1"/><rect x="2" y="12" width="1" height="1"/><rect x="0" y="14" width="1" height="1"/><rect x="2" y="14" width="1" height="1"/><rect x="0" y="16" width="1" height="1"/><rect x="2" y="16" width="1" height="1"/><rect x="0" y="18" width="1" height="1"/><rect x="2" y="18" width="1" height="1"/><rect x="0" y="20" width="1" height="1"/><rect x="2" y="20" width="1" height="1"/><rect x="0" y="22" width="1" height="1"/><rect x="2" y="22" width="1" height="1"/><rect x="0" y="24" width="1" height="1"/><rect x="2" y="24" width="1" height="1"/><rect x="0" y="26" width="1" height="1"/><rect x="2" y="26" width="1" height="1"/><rect x="0" y="28" width="1" height="1"/><rect x="2" y="28" width="1" height="1"/><rect x="0" y="30" width="1" height="1"/><rect x="2" y="30" width="1" height="1"/><rect x="0" y="32" width="1" height="1"/><rect x="2" y="32" width="1" height="1"/><rect x="0" y="34" width="1" height="1"/><rect x="2" y="34" width="1" height="1"/><rect x="0" y="36" width="1" height="1"/><rect x="2" y="36" width="1" height="1"/><rect x="0" y="38" width="1" height="1"/><rect x="2" y="38" width="1" height="1"/></g></svg>
<svg class="a" style="left:700px;top:339px;" width="4" height="40" viewBox="0 0 4 40"><g fill="#5f6480"><rect x="0" y="0" width="1" height="1"/><rect x="2" y="0" width="1" height="1"/><rect x="0" y="2" width="1" height="1"/><rect x="2" y="2" width="1" height="1"/><rect x="0" y="4" width="1" height="1"/><rect x="2" y="4" width="1" height="1"/><rect x="0" y="6" width="1" height="1"/><rect x="2" y="6" width="1" height="1"/><rect x="0" y="8" width="1" height="1"/><rect x="2" y="8" width="1" height="1"/><rect x="0" y="10" width="1" height="1"/><rect x="2" y="10" width="1" height="1"/><rect x="0" y="12" width="1" height="1"/><rect x="2" y="12" width="1" height="1"/><rect x="0" y="14" width="1" height="1"/><rect x="2" y="14" width="1" height="1"/><rect x="0" y="16" width="1" height="1"/><rect x="2" y="16" width="1" height="1"/><rect x="0" y="18" width="1" height="1"/><rect x="2" y="18" width="1" height="1"/><rect x="0" y="20" width="1" height="1"/><rect x="2" y="20" width="1" height="1"/><rect x="0" y="22" width="1" height="1"/><rect x="2" y="22" width="1" height="1"/><rect x="0" y="24" width="1" height="1"/><rect x="2" y="24" width="1" height="1"/><rect x="0" y="26" width="1" height="1"/><rect x="2" y="26" width="1" height="1"/><rect x="0" y="28" width="1" height="1"/><rect x="2" y="28" width="1" height="1"/><rect x="0" y="30" width="1" height="1"/><rect x="2" y="30" width="1" height="1"/><rect x="0" y="32" width="1" height="1"/><rect x="2" y="32" width="1" height="1"/><rect x="0" y="34" width="1" height="1"/><rect x="2" y="34" width="1" height="1"/><rect x="0" y="36" width="1" height="1"/><rect x="2" y="36" width="1" height="1"/><rect x="0" y="38" width="1" height="1"/><rect x="2" y="38" width="1" height="1"/></g></svg>
<svg class="a" style="left:493px;top:605px;" width="40" height="4" viewBox="0 0 40 4"><g fill="#5f6480"><rect x="0" y="0" width="1" height="1"/><rect x="2" y="0" width="1" height="1"/><rect x="4" y="0" width="1" height="1"/><rect x="6" y="0" width="1" height="1"/><rect x="8" y="0" width="1" height="1"/><rect x="10" y="0" width="1" height="1"/><rect x="12" y="0" width="1" height="1"/><rect x="14" y="0" width="1" height="1"/><rect x="16" y="0" width="1" height="1"/><rect x="18" y="0" width="1" height="1"/><rect x="20" y="0" width="1" height="1"/><rect x="22" y="0" width="1" height="1"/><rect x="24" y="0" width="1" height="1"/><rect x="26" y="0" width="1" height="1"/><rect x="28" y="0" width="1" height="1"/><rect x="30" y="0" width="1" height="1"/><rect x="32" y="0" width="1" height="1"/><rect x="34" y="0" width="1" height="1"/><rect x="36" y="0" width="1" height="1"/><rect x="38" y="0" width="1" height="1"/><rect x="0" y="2" width="1" height="1"/><rect x="2" y="2" width="1" height="1"/><rect x="4" y="2" width="1" height="1"/><rect x="6" y="2" width="1" height="1"/><rect x="8" y="2" width="1" height="1"/><rect x="10" y="2" width="1" height="1"/><rect x="12" y="2" width="1" height="1"/><rect x="14" y="2" width="1" height="1"/><rect x="16" y="2" width="1" height="1"/><rect x="18" y="2" width="1" height="1"/><rect x="20" y="2" width="1" height="1"/><rect x="22" y="2" width="1" height="1"/><rect x="24" y="2" width="1" height="1"/><rect x="26" y="2" width="1" height="1"/><rect x="28" y="2" width="1" height="1"/><rect x="30" y="2" width="1" height="1"/><rect x="32" y="2" width="1" height="1"/><rect x="34" y="2" width="1" height="1"/><rect x="36" y="2" width="1" height="1"/><rect x="38" y="2" width="1" height="1"/></g></svg>
<div class="a" style="left:706px;top:112px;width:318px;height:1px;background:#a3a4a7;"></div>
<div class="a" style="left:706px;top:112px;width:1px;height:492px;background:#a3a4a7;"></div>
<div class="a" style="left:706px;top:603px;width:318px;height:1px;background:#a3a4a7;"></div>
<svg class="a" style="left:993px;top:122px;" width="8" height="10" viewBox="0 0 8 10"><rect x="2" y="1" width="3" height="3" fill="#4a4a52"/><path d="M2 3.6 H5 L7.2 6.2 H-0.2 Z" fill="#4a4a52"/><rect x="3" y="6" width="1.2" height="3.2" fill="#55555a"/></svg>
<svg class="a" style="left:1008px;top:123px;" width="10" height="9" viewBox="0 0 10 9"><path d="M0.8 0.8 L8.7 7.7 M8.7 0.8 L0.8 7.7" stroke="#45454c" stroke-width="1.3"/></svg>
<div class="a" style="left:712px;top:145px;width:280px;height:21px;background:#eeeff1;border:1px solid #a2a2a4;box-sizing:border-box;"></div>
<svg class="a" style="left:977px;top:151px;" width="10" height="9" viewBox="0 0 10 9"><path d="M1 0.5 L9 8.5 M9 0.5 L1 8.5" stroke="#b0a4aa" stroke-width="1.2"/></svg>
<div class="a" style="left:995px;top:148px;width:1px;height:15px;background:#c8a8b4;"></div>
<svg class="a" style="left:1002px;top:148px;" width="17" height="13" viewBox="0 0 17 13"><path d="M0 1 H12 M0 4.5 H12 M0 8 H5 M0 11.5 H3" stroke="#555" stroke-width="2"/><path d="M7 7 H16.5 L11.75 12.5 Z" fill="#555"/></svg>
<div class="a" style="left:707px;top:168px;width:317px;height:320px;background:#edeef0;"></div>
<div class="a" style="left:707px;top:168px;width:317px;height:1px;background:#8e8f92;"></div>
<div class="a" style="left:707px;top:168px;width:1px;height:320px;background:#8e8f92;"></div>
<div class="a" style="left:1023px;top:168px;width:1px;height:320px;background:#b0b1b4;"></div>
<div class="a" style="left:707px;top:487px;width:317px;height:1px;background:#b8b9bc;"></div>
<div class="a" style="left:769px;top:188px;width:116px;height:18px;background:#c4dcf7;"></div>
<svg class="a" style="left:716px;top:177px;" width="7" height="7" viewBox="0 0 7 7"><path d="M6.5 0.5 V6.5 H0.5 Z" fill="#333"/></svg>
<svg class="a" style="left:733px;top:172px;" width="14" height="14" viewBox="0 0 14 14"><rect x="0.5" y="0.5" width="12.5" height="12.5" rx="2" fill="none" stroke="#58585a" stroke-dasharray="2 1.3"/><rect x="2.5" y="2.5" width="8.5" height="3" fill="#8c8c8e"/><rect x="2.5" y="6.5" width="4" height="4" fill="#8c8c8e"/><rect x="7" y="6.5" width="4" height="4" fill="#8c8c8e"/></svg>
<svg class="a" style="left:736px;top:193px;" width="6" height="10" viewBox="0 0 6 10"><path d="M0.7 0.7 L5 5 L0.7 9.3 Z" fill="#f2f2f2" stroke="#333" stroke-width="1"/></svg>
<svg class="a" style="left:753px;top:190px;" width="14" height="14" viewBox="0 0 14 14"><rect x="0.5" y="0.5" width="12.5" height="12.5" rx="2" fill="none" stroke="#58585a" stroke-dasharray="2 1.3"/><rect x="2.5" y="2.5" width="8.5" height="3" fill="#8c8c8e"/><rect x="2.5" y="6.5" width="4" height="4" fill="#8c8c8e"/><rect x="7" y="6.5" width="4" height="4" fill="#8c8c8e"/></svg>
<svg class="a" style="left:753px;top:208px;" width="14" height="14" viewBox="0 0 14 14"><rect x="0.5" y="0.5" width="12.5" height="12.5" rx="2" fill="none" stroke="#58585a" stroke-dasharray="2 1.3"/><rect x="2.5" y="2.5" width="8.5" height="3" fill="#8c8c8e"/><rect x="2.5" y="6.5" width="4" height="4" fill="#8c8c8e"/><rect x="7" y="6.5" width="4" height="4" fill="#8c8c8e"/></svg>
<svg class="a" style="left:753px;top:226px;" width="14" height="14" viewBox="0 0 14 14"><rect x="0.5" y="0.5" width="12.5" height="12.5" rx="2" fill="none" stroke="#58585a" stroke-dasharray="2 1.3"/><rect x="2.5" y="2.5" width="8.5" height="3" fill="#8c8c8e"/><rect x="2.5" y="6.5" width="4" height="4" fill="#8c8c8e"/><rect x="7" y="6.5" width="4" height="4" fill="#8c8c8e"/></svg>
<svg class="a" style="left:716px;top:249px;" width="7" height="7" viewBox="0 0 7 7"><path d="M6.5 0.5 V6.5 H0.5 Z" fill="#333"/></svg>
<svg class="a" style="left:733px;top:244px;" width="14" height="14" viewBox="0 0 14 14"><rect x="0.5" y="0.5" width="12.5" height="12.5" rx="2" fill="none" stroke="#58585a" stroke-dasharray="2 1.3"/><rect x="2.5" y="2.5" width="8.5" height="3" fill="#8c8c8e"/><rect x="2.5" y="6.5" width="4" height="4" fill="#8c8c8e"/><rect x="7" y="6.5" width="4" height="4" fill="#8c8c8e"/></svg>
<svg class="a" style="left:753px;top:262px;" width="14" height="14" viewBox="0 0 14 14"><rect x="0.5" y="0.5" width="12.5" height="12.5" rx="2" fill="none" stroke="#58585a" stroke-dasharray="2 1.3"/><rect x="2.5" y="2.5" width="8.5" height="3" fill="#8c8c8e"/><rect x="2.5" y="6.5" width="4" height="4" fill="#8c8c8e"/><rect x="7" y="6.5" width="4" height="4" fill="#8c8c8e"/></svg>
<svg class="a" style="left:716px;top:283px;" width="6" height="10" viewBox="0 0 6 10"><path d="M0.7 0.7 L5 5 L0.7 9.3 Z" fill="#f2f2f2" stroke="#333" stroke-width="1"/></svg>
<svg class="a" style="left:733px;top:280px;" width="14" height="14" viewBox="0 0 14 14"><rect x="0.5" y="0.5" width="12.5" height="12.5" rx="2" fill="none" stroke="#58585a" stroke-dasharray="2 1.3"/><rect x="2.5" y="2.5" width="8.5" height="3" fill="#8c8c8e"/><rect x="2.5" y="6.5" width="4" height="4" fill="#8c8c8e"/><rect x="7" y="6.5" width="4" height="4" fill="#8c8c8e"/></svg>
<svg class="a" style="left:846px;top:489px;" width="40" height="4" viewBox="0 0 40 4"><g fill="#777a88"><rect x="0" y="0" width="1" height="1"/><rect x="2" y="0" width="1" height="1"/><rect x="4" y="0" width="1" height="1"/><rect x="6" y="0" width="1" height="1"/><rect x="8" y="0" width="1" height="1"/><rect x="10" y="0" width="1" height="1"/><rect x="12" y="0" width="1" height="1"/><rect x="14" y="0" width="1" height="1"/><rect x="16" y="0" width="1" height="1"/><rect x="18" y="0" width="1" height="1"/><rect x="20" y="0" width="1" height="1"/><rect x="22" y="0" width="1" height="1"/><rect x="24" y="0" width="1" height="1"/><rect x="26" y="0" width="1" height="1"/><rect x="28" y="0" width="1" height="1"/><rect x="30" y="0" width="1" height="1"/><rect x="32" y="0" width="1" height="1"/><rect x="34" y="0" width="1" height="1"/><rect x="36" y="0" width="1" height="1"/><rect x="38" y="0" width="1" height="1"/><rect x="0" y="2" width="1" height="1"/><rect x="2" y="2" width="1" height="1"/><rect x="4" y="2" width="1" height="1"/><rect x="6" y="2" width="1" height="1"/><rect x="8" y="2" width="1" height="1"/><rect x="10" y="2" width="1" height="1"/><rect x="12" y="2" width="1" height="1"/><rect x="14" y="2" width="1" height="1"/><rect x="16" y="2" width="1" height="1"/><rect x="18" y="2" width="1" height="1"/><rect x="20" y="2" width="1" height="1"/><rect x="22" y="2" width="1" height="1"/><rect x="24" y="2" width="1" height="1"/><rect x="26" y="2" width="1" height="1"/><rect x="28" y="2" width="1" height="1"/><rect x="30" y="2" width="1" height="1"/><rect x="32" y="2" width="1" height="1"/><rect x="34" y="2" width="1" height="1"/><rect x="36" y="2" width="1" height="1"/><rect x="38" y="2" width="1" height="1"/></g></svg>
<div class="a" style="left:707px;top:493px;width:317px;height:50px;background:#d3d4d6;border:1px solid #a9aaad;box-sizing:border-box;border-right:none;"></div>
<svg class="a" style="left:1010px;top:502px;" width="7" height="4" viewBox="0 0 7 4"><path d="M0 4 L3.5 0 L7 4 Z" fill="#777"/></svg>
<svg class="a" style="left:1010px;top:531px;" width="7" height="4" viewBox="0 0 7 4"><path d="M0 0 L3.5 4 L7 0 Z" fill="#777"/></svg>
<div class="a" style="left:709px;top:546px;width:1px;height:18px;background:#aeaeb1;"></div>
<div class="a" style="left:774px;top:546px;width:1px;height:18px;background:#aeaeb1;"></div>
<div class="a" style="left:880px;top:546px;width:1px;height:18px;background:#aeaeb1;"></div>
<div class="a" style="left:946px;top:546px;width:1px;height:18px;background:#aeaeb1;"></div>
<div class="a" style="left:707px;top:571px;width:317px;height:32px;background:#c5c6c9;"></div>
<div class="a" style="left:707px;top:571px;width:317px;height:1px;background:#a6a7aa;"></div>
<div class="a" style="left:710px;top:572px;width:89px;height:26px;background:#c5c6c9;border:1px solid #a6a7aa;box-sizing:border-box;"></div>
<div class="a" style="left:798px;top:572px;width:122px;height:26px;background:#c5c6c9;border:1px solid #a6a7aa;box-sizing:border-box;"></div>
<div class="a" style="left:919px;top:571px;width:97px;height:27px;background:#d4d5d7;border:1px solid #a6a7aa;box-sizing:border-box;border-top:none;"></div>
<div class="a" style="left:0px;top:610px;width:1024px;height:1px;background:#a3a4a7;"></div>
<div class="a" style="left:0px;top:629px;width:1024px;height:1px;background:#a3a4a7;"></div>
<svg class="a" style="left:993px;top:615px;" width="8" height="10" viewBox="0 0 8 10"><rect x="2" y="1" width="3" height="3" fill="#4a4a52"/><path d="M2 3.6 H5 L7.2 6.2 H-0.2 Z" fill="#4a4a52"/><rect x="3" y="6" width="1.2" height="3.2" fill="#55555a"/></svg>
<svg class="a" style="left:1008px;top:616px;" width="10" height="9" viewBox="0 0 10 9"><path d="M0.8 0.8 L8.7 7.7 M8.7 0.8 L0.8 7.7" stroke="#45454c" stroke-width="1.3"/></svg>
<div class="a" style="left:0px;top:630px;width:1024px;height:113px;background:#e7e8eb;"></div>
<svg class="a" style="left:0;top:630px" width="1024" height="113"><rect width="1024" height="113" fill="url(#dith)"/></svg>
<div class="a" style="left:0px;top:743px;width:1024px;height:2px;background:#9c9d9f;"></div>
<svg class="a" style="left:1013px;top:756px;" width="8" height="8" viewBox="0 0 8 8"><path d="M7 0 V7 H0 Z" fill="#333"/></svg>
<div class="t" style="left:18px;top:1.46px;font-size:16px;line-height:20px;font-weight:bold;color:#b3bfdb;letter-spacing:0.3px;transform-origin:0 0;transform:scaleX(1.0331);-webkit-text-stroke:0;">NEXACRO Studio</div>
<div class="t" style="left:199.5px;top:1.15px;font-size:14px;line-height:18px;font-weight:bold;color:#2a2a2a;letter-spacing:-0.3px;transform-origin:0 0;transform:scaleX(0.9270);-webkit-text-stroke:0;">QuickCodeSample</div>
<div class="t" style="left:20.5px;top:30.84px;font-size:12px;line-height:16px;font-weight:normal;color:#333;letter-spacing:-0.3px;transform-origin:0 0;transform:scaleX(0.9645);">File</div>
<div class="t" style="left:65px;top:30.84px;font-size:12px;line-height:16px;font-weight:normal;color:#333;letter-spacing:-0.172px;">Edit</div>
<div class="t" style="left:112px;top:30.84px;font-size:12px;line-height:16px;font-weight:normal;color:#333;letter-spacing:-0.3px;transform-origin:0 0;transform:scaleX(0.9929);">Assist</div>
<div class="t" style="left:169.5px;top:30.84px;font-size:12px;line-height:16px;font-weight:normal;color:#333;letter-spacing:-0.3px;transform-origin:0 0;transform:scaleX(0.9961);">View</div>
<div class="t" style="left:221px;top:30.84px;font-size:12px;line-height:16px;font-weight:normal;color:#333;letter-spacing:-0.070px;">Quick Code</div>
<div class="t" style="left:310.5px;top:30.84px;font-size:12px;line-height:16px;font-weight:normal;color:#333;letter-spacing:-0.215px;">Debug</div>
<div class="t" style="left:372.5px;top:30.84px;font-size:12px;line-height:16px;font-weight:normal;color:#333;letter-spacing:-0.3px;transform-origin:0 0;transform:scaleX(0.9759);">Generate</div>
<div class="t" style="left:446px;top:30.84px;font-size:12px;line-height:16px;font-weight:normal;color:#333;letter-spacing:-0.110px;">Deploy</div>
<div class="t" style="left:510px;top:30.84px;font-size:12px;line-height:16px;font-weight:normal;color:#333;letter-spacing:-0.203px;">Tools</div>
<div class="t" style="left:565px;top:30.84px;font-size:12px;line-height:16px;font-weight:normal;color:#333;letter-spacing:0.003px;">Help</div>
<div class="t" style="left:455px;top:59.84px;font-size:12px;line-height:16px;font-weight:normal;color:#3a3a3a;letter-spacing:-0.3px;transform-origin:0 0;transform:scaleX(0.9731);">Desktop_screen</div>
<div class="t" style="left:610px;top:59.84px;font-size:12px;line-height:16px;font-weight:normal;color:#3a3a3a;letter-spacing:-0.124px;">Nexacro Runtime Environment (x86)</div>
<div class="t" style="left:7px;top:119.84px;font-size:12px;line-height:16px;font-weight:bold;color:#333;letter-spacing:-0.200px;-webkit-text-stroke:0;">Project Explorer</div>
<div class="t" style="left:9px;top:147.84px;font-size:12px;line-height:16px;font-weight:normal;color:#4a4a4a;letter-spacing:-0.048px;">All Project</div>
<div class="t" style="left:9px;top:172.84px;font-size:12px;line-height:16px;font-weight:normal;color:#b0adb4;letter-spacing:0.062px;">Input text</div>
<div class="t" style="left:25px;top:194.84px;font-size:12px;line-height:16px;font-weight:bold;color:#111;letter-spacing:-0.191px;-webkit-text-stroke:0;">Project &#x27;QuickCodeSample&#x27;</div>
<div class="t" style="left:44px;top:212.84px;font-size:12px;line-height:16px;font-weight:normal;color:#333;letter-spacing:0.057px;">Environment</div>
<div class="t" style="left:44px;top:230.84px;font-size:12px;line-height:16px;font-weight:normal;color:#333;letter-spacing:-0.075px;">TypeDefinition</div>
<div class="t" style="left:44px;top:248.84px;font-size:12px;line-height:16px;font-weight:normal;color:#333;letter-spacing:0.214px;">Application Information</div>
<div class="t" style="left:44px;top:266.84px;font-size:12px;line-height:16px;font-weight:normal;color:#333;letter-spacing:-0.090px;">Base</div>
<div class="t" style="left:44px;top:284.84px;font-size:12px;line-height:16px;font-weight:normal;color:#333;letter-spacing:-0.3px;transform-origin:0 0;transform:scaleX(0.9607);">FrameBase</div>
<div class="t" style="left:44px;top:302.84px;font-size:12px;line-height:16px;font-weight:normal;color:#333;letter-spacing:0.000px;">svc</div>
<div class="t" style="left:21px;top:576.84px;font-size:12px;line-height:16px;font-weight:normal;color:#333;letter-spacing:-0.117px;">Project Explorer</div>
<div class="t" style="left:139.5px;top:576.84px;font-size:12px;line-height:16px;font-weight:normal;color:#333;letter-spacing:-0.3px;transform-origin:0 0;transform:scaleX(0.9918);">Resource Explorer</div>
<div class="t" style="left:714.5px;top:119.84px;font-size:12px;line-height:16px;font-weight:bold;color:#333;letter-spacing:-0.3px;transform-origin:0 0;transform:scaleX(0.9814);-webkit-text-stroke:0;">Quick Code</div>
<div class="t" style="left:716px;top:147.84px;font-size:12px;line-height:16px;font-weight:normal;color:#b0adb4;letter-spacing:0.154px;">Input filter text</div>
<div class="t" style="left:753.5px;top:170.84px;font-size:12px;line-height:16px;font-weight:bold;color:#222;letter-spacing:-0.232px;-webkit-text-stroke:0;">FreeForm</div>
<div class="t" style="left:772.5px;top:188.84px;font-size:12px;line-height:16px;font-weight:normal;color:#111;letter-spacing:0.036px;">buttonViewTemplate</div>
<div class="t" style="left:772.5px;top:206.84px;font-size:12px;line-height:16px;font-weight:normal;color:#222;letter-spacing:-0.009px;">freeformViewTemplate</div>
<div class="t" style="left:772.5px;top:224.84px;font-size:12px;line-height:16px;font-weight:normal;color:#222;letter-spacing:-0.195px;">searchViewTemplate</div>
<div class="t" style="left:753.5px;top:242.84px;font-size:12px;line-height:16px;font-weight:bold;color:#222;letter-spacing:-0.037px;-webkit-text-stroke:0;">GridView</div>
<div class="t" style="left:772.5px;top:260.84px;font-size:12px;line-height:16px;font-weight:normal;color:#222;letter-spacing:0.000px;">gridViewTemplate</div>
<div class="t" style="left:753.5px;top:278.84px;font-size:12px;line-height:16px;font-weight:bold;color:#222;letter-spacing:-0.139px;-webkit-text-stroke:0;">Tutorial</div>
<div class="t" style="left:723.5px;top:546.84px;font-size:12px;line-height:16px;font-weight:normal;color:#777;letter-spacing:0.163px;">Model</div>
<div class="t" style="left:788.5px;top:546.84px;font-size:12px;line-height:16px;font-weight:bold;color:#333;letter-spacing:-0.3px;transform-origin:0 0;transform:scaleX(0.9634);-webkit-text-stroke:0;">View Template</div>
<div class="t" style="left:894.5px;top:546.84px;font-size:12px;line-height:16px;font-weight:normal;color:#777;letter-spacing:0.190px;">Action</div>
<div class="t" style="left:728px;top:576.84px;font-size:12px;line-height:16px;font-weight:normal;color:#333;letter-spacing:-0.3px;transform-origin:0 0;transform:scaleX(0.9864);">Properties</div>
<div class="t" style="left:816px;top:576.84px;font-size:12px;line-height:16px;font-weight:normal;color:#333;letter-spacing:-0.042px;">Computed Style</div>
<div class="t" style="left:935.5px;top:576.84px;font-size:12px;line-height:16px;font-weight:normal;color:#333;letter-spacing:-0.070px;">Quick Code</div>
<div class="t" style="left:7px;top:611.84px;font-size:12px;line-height:16px;font-weight:bold;color:#333;letter-spacing:0.029px;-webkit-text-stroke:0;">Output</div>
<div class="t" style="left:11.5px;top:748.84px;font-size:12px;line-height:16px;font-weight:normal;color:#666;letter-spacing:-0.3px;transform-origin:0 0;transform:scaleX(0.9431);">Ready</div>
<div class="t" style="left:777px;top:748.84px;font-size:12px;line-height:16px;font-weight:normal;color:#666;letter-spacing:-0.3px;transform-origin:0 0;transform:scaleX(0.9228);">READONLY</div>
<div class="t" style="left:848.5px;top:748.84px;font-size:12px;line-height:16px;font-weight:normal;color:#666;letter-spacing:-0.3px;transform-origin:0 0;transform:scaleX(0.9050);">INS</div>
<div class="t" style="left:872.5px;top:748.84px;font-size:12px;line-height:16px;font-weight:normal;color:#666;letter-spacing:-0.3px;transform-origin:0 0;transform:scaleX(0.8996);">CAP</div>
<div class="t" style="left:901px;top:748.84px;font-size:12px;line-height:16px;font-weight:normal;color:#3a8ee6;letter-spacing:0.157px;">NUM</div>
<div class="t" style="left:941.5px;top:748.84px;font-size:12px;line-height:16px;font-weight:normal;color:#3a8ee6;letter-spacing:-0.3px;transform-origin:0 0;transform:scaleX(0.8576);">DEVELOPER</div>
</body></html>
